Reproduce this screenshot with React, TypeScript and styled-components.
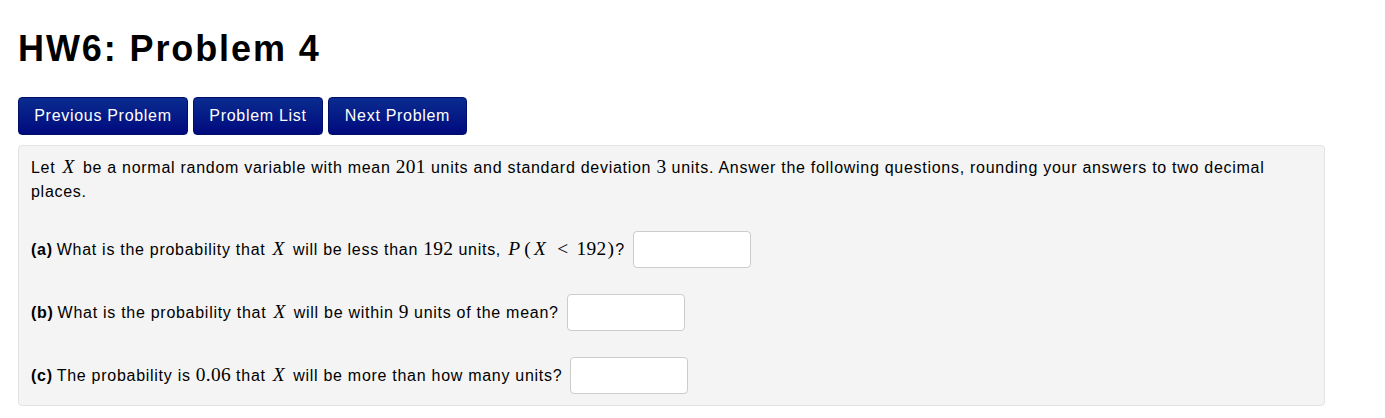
import React from "react";
import styled, { createGlobalStyle } from "styled-components";

const Global = createGlobalStyle`
  html, body { margin: 0; padding: 0; background: #fff; }
  body { font-family: "Liberation Sans", Arial, sans-serif; color: #000; }
`;

const Page = styled.div`
  padding: 29px 18px 0 18px;
  width: 1307px;
`;

const Title = styled.h1`
  margin: 0;
  font-size: 36px;
  line-height: 40px;
  font-weight: 700;
  letter-spacing: 1.9px;
  color: #000;
`;

const Nav = styled.div`
  display: flex;
  gap: 5px;
  margin-top: 28px;
`;

const NavButton = styled.button<{ $w: number }>`
  width: ${(p) => p.$w}px;
  height: 38px;
  padding: 0;
  border: 1px solid #00106a;
  border-radius: 4px;
  background: linear-gradient(#0a2c90, #000a7e);
  color: #fff;
  font-family: "Liberation Sans", Arial, sans-serif;
  font-size: 16px;
  letter-spacing: 0.7px;
  cursor: pointer;
`;

const Well = styled.div`
  margin-top: 10px;
  background: #f4f4f4;
  border: 1px solid #e3e3e3;
  border-radius: 4px;
  padding: 9px 12px 11px 12px;
  font-size: 16px;
  letter-spacing: 0.72px;
`;

const Para = styled.p`
  margin: 0;
  line-height: 24px;
`;

const Question = styled.p<{ $top: number }>`
  margin: ${(p) => p.$top}px 0 0 0;
  display: flex;
  align-items: center;
  line-height: 24px;
`;

const Label = styled.b`
  font-weight: 700;
  margin-right: 4px;
`;

const M = styled.span`
  font-family: "Liberation Serif", "Times New Roman", serif;
  font-size: 19.4px;
  letter-spacing: 0.3px;
`;

const MI = styled(M)`
  font-style: italic;
  padding: 0 3px 0 2px;
`;

const Paren = styled(M)`
  padding: 0 1px;
`;

const Rel = styled(M)`
  margin: 0 8px;
`;

const Answer = styled.input`
  width: 118px;
  height: 37px;
  box-sizing: border-box;
  margin-left: 8px;
  border: 1px solid #cccccc;
  border-radius: 4px;
  background: #fff;
`;

export default function App() {
  return (
    <>
      <Global />
      <Page>
        <Title>HW6: Problem 4</Title>
        <Nav>
          <NavButton $w={170}>Previous Problem</NavButton>
          <NavButton $w={130}>Problem List</NavButton>
          <NavButton $w={139}>Next Problem</NavButton>
        </Nav>
        <Well>
          <Para>
            Let <MI>X</MI> be a normal random variable with mean <M>201</M> units and standard
            deviation <M>3</M> units. Answer the following questions, rounding your answers to two
            decimal places.
          </Para>
          <Question $top={27}>
            <span>
              <Label>(a)</Label>What is the probability that <MI>X</MI> will be less than <M>192</M>{" "}
              units, <MI>P</MI>
              <Paren>(</Paren>
              <MI>X</MI>
              <Rel>&lt;</Rel>
              <M>192</M>
              <Paren>)</Paren>?
            </span>
            <Answer />
          </Question>
          <Question $top={26}>
            <span>
              <Label>(b)</Label>What is the probability that <MI>X</MI> will be within <M>9</M> units
              of the mean?
            </span>
            <Answer />
          </Question>
          <Question $top={26}>
            <span>
              <Label>(c)</Label>The probability is <M>0.06</M> that <MI>X</MI> will be more than how
              many units?
            </span>
            <Answer />
          </Question>
        </Well>
      </Page>
    </>
  );
}
